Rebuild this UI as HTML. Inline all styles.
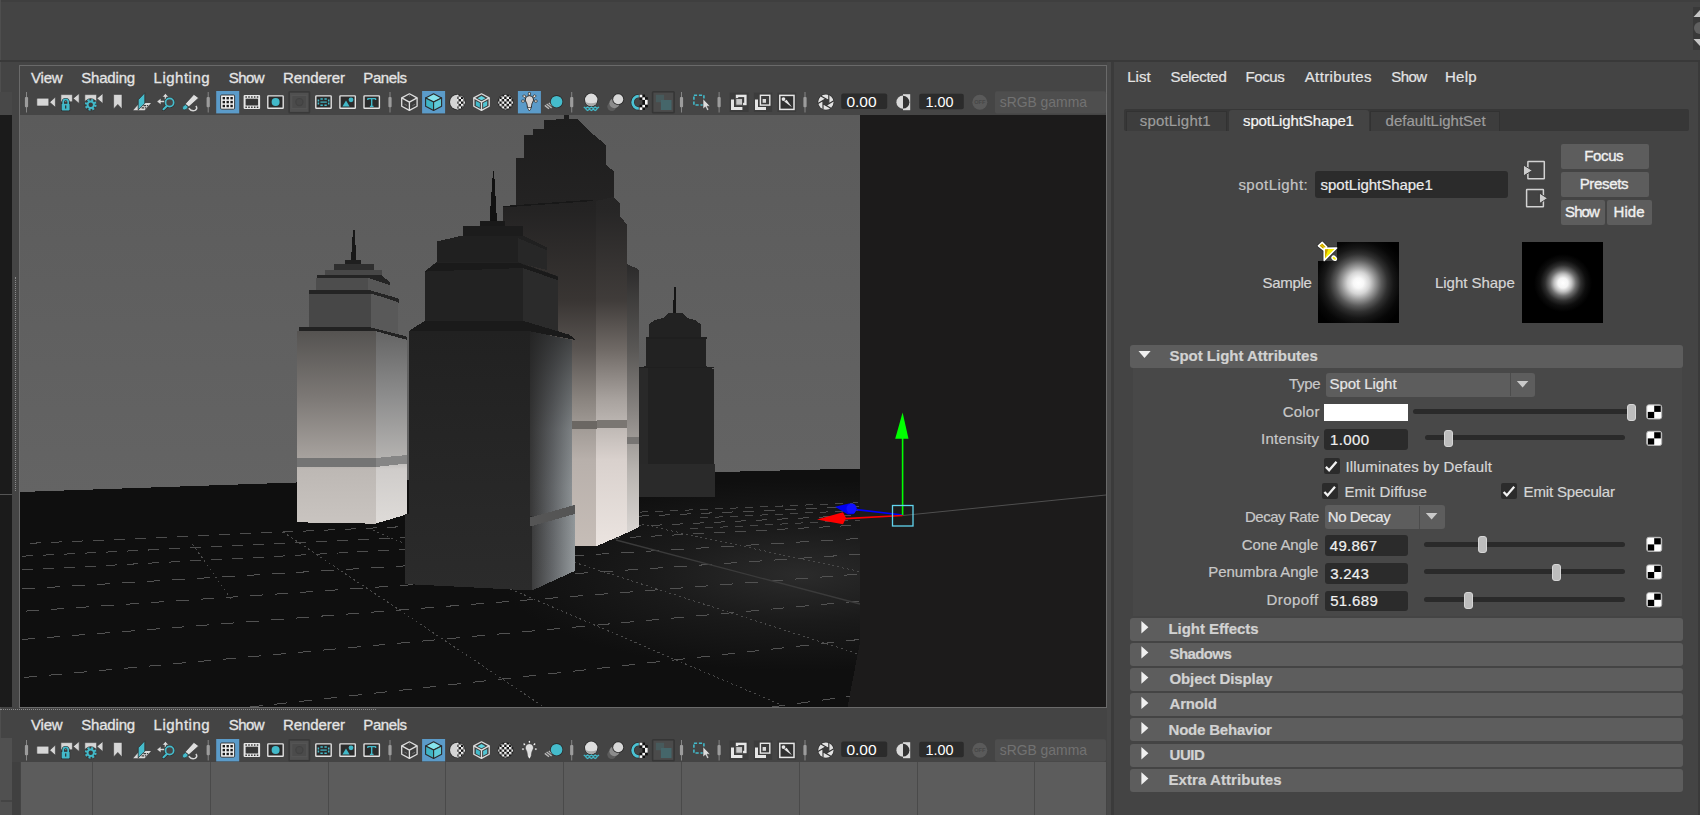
<!DOCTYPE html>
<html>
<head>
<meta charset="utf-8">
<title>Maya - Spot Light Attributes</title>
<style>
*{box-sizing:border-box;margin:0;padding:0}
html,body{width:1700px;height:815px;overflow:hidden;background:#444444}
body{position:relative;font-family:"Liberation Sans",sans-serif;font-size:15px;color:#e4e4e4}
.a{position:absolute}
.t{position:absolute;white-space:nowrap;line-height:18px;height:18px}
.b{font-weight:bold}
.menu{color:#e2e2e2}
.lbl{color:#c6c6c6;text-align:right}
.fld{position:absolute;background:#2b2b2b;border-radius:3px}
.btn{position:absolute;background:#5d5d5d;border-radius:2px;color:#f0f0f0;text-align:center}
.hdr{position:absolute;left:1130px;width:1553px;height:23px;background:#5d5d5d;border-radius:3px}
.hdr .t{left:39px;top:2px;color:#d2d2d2;font-weight:bold}
.trk{position:absolute;height:5px;background:#2a2a2a;border-radius:3px}
.knob{position:absolute;width:9px;height:17px;background:#bdbdbd;border:1px solid #d6d6d6;border-radius:3px}
.chk{position:absolute;width:16px;height:15px}
.cb{position:absolute;width:16px;height:16px;background:#2b2b2b;border-radius:2px}
.dd{position:absolute;background:#5d5d5d;border-radius:3px}
.sep{position:absolute;width:1px;background:#4c4c4c}
</style>
</head>
<body>

<!-- ===== global chrome ===== -->
<div class="a" style="left:0;top:0;width:1700px;height:2px;background:#3f3f3f"></div>
<div class="a" style="left:0;top:0;width:1px;height:815px;background:#4e4e4e"></div>
<div class="a" style="left:0;top:60px;width:1700px;height:2px;background:#393939"></div>
<!-- top-right scroll widget -->
<svg class="a" style="left:1693px;top:7px" width="7" height="43" viewBox="0 0 7 43">
<rect width="7" height="43" fill="#393939"/>
<path d="M0.5 10 L7 3 L7 10Z" fill="#c6c6c6"/>
<circle cx="7" cy="21" r="6" fill="#606060"/>
<path d="M0.5 32 L7 32 L7 39Z" fill="#c6c6c6"/>
</svg>

<!-- left narrow strips -->
<div class="a" style="left:0;top:92px;width:12px;height:23px;background:#484848"></div>
<div class="a" style="left:0;top:115px;width:12px;height:592px;background:#1b1b1b"></div>
<div class="a" style="left:0;top:494px;width:12px;height:1px;background:#555"></div>
<div class="a" style="left:15px;top:277px;width:0;height:214px;border-left:1px dotted #8a8a8a"></div>
<div class="a" style="left:0;top:709px;width:376px;height:0;border-top:1px dotted #8a8a8a"></div>
<div class="a" style="left:0;top:738px;width:12px;height:62px;background:#505050"></div>
<div class="a" style="left:0;top:802px;width:12px;height:13px;background:#505050"></div>
<div class="a" style="left:12px;top:762px;width:8px;height:53px;background:#404040"></div>

<!-- divider between viewport and attribute editor -->
<div class="a" style="left:1107px;top:62px;width:4px;height:753px;background:#484848"></div>
<div class="a" style="left:1111px;top:62px;width:3px;height:753px;background:#3b3b3b"></div>
<div class="a" style="left:1698px;top:62px;width:2px;height:753px;background:#3a3a3a"></div>

<!-- ===== viewport panel frame ===== -->
<div class="a" style="left:19px;top:65px;width:1088px;height:643px;border:1px solid #6a6a6a;background:#454545"></div>

<!-- ===== 3D viewport scene ===== -->
<svg class="a" style="left:20px;top:115px" width="1086" height="592" viewBox="20 115 1086 592" shape-rendering="crispEdges">
<defs>
<linearGradient id="sky" x1="0" y1="115" x2="0" y2="495" gradientUnits="userSpaceOnUse">
<stop offset="0" stop-color="#5b5b5b"/><stop offset="1" stop-color="#646464"/></linearGradient>
<radialGradient id="gnd" cx="800" cy="575" r="300" gradientUnits="userSpaceOnUse" gradientTransform="translate(800 575) scale(1 0.32) translate(-800 -575)">
<stop offset="0" stop-color="#2b2b2b"/><stop offset="0.5" stop-color="#1a1a1a"/><stop offset="1" stop-color="#0f0f0f"/></radialGradient>
<!-- left lit building -->
<linearGradient id="b1f" x1="0" y1="331" x2="0" y2="523" gradientUnits="userSpaceOnUse">
<stop offset="0" stop-color="#555351"/><stop offset="0.35" stop-color="#7d7976"/><stop offset="0.66" stop-color="#a7a29e"/><stop offset="0.72" stop-color="#bdb8b4"/><stop offset="1" stop-color="#c9c4c0"/></linearGradient>
<linearGradient id="b1r" x1="0" y1="331" x2="0" y2="523" gradientUnits="userSpaceOnUse">
<stop offset="0" stop-color="#646464"/><stop offset="0.35" stop-color="#8e8e8e"/><stop offset="0.66" stop-color="#b4b2b0"/><stop offset="0.72" stop-color="#cfccca"/><stop offset="1" stop-color="#dedbd8"/></linearGradient>
<!-- back tall building -->
<linearGradient id="b3f" x1="0" y1="115" x2="0" y2="546" gradientUnits="userSpaceOnUse">
<stop offset="0" stop-color="#1d1d1d"/><stop offset="0.22" stop-color="#242323"/><stop offset="0.43" stop-color="#393533"/><stop offset="0.545" stop-color="#5a5552"/><stop offset="0.66" stop-color="#8a847f"/><stop offset="0.71" stop-color="#9c9691"/><stop offset="0.8" stop-color="#b8b0ab"/><stop offset="1" stop-color="#c6bdb7"/></linearGradient>
<linearGradient id="b3r" x1="0" y1="115" x2="0" y2="546" gradientUnits="userSpaceOnUse">
<stop offset="0" stop-color="#1f1f1f"/><stop offset="0.22" stop-color="#272626"/><stop offset="0.43" stop-color="#403c3a"/><stop offset="0.545" stop-color="#706a66"/><stop offset="0.66" stop-color="#a8a29e"/><stop offset="0.71" stop-color="#bab4b0"/><stop offset="0.8" stop-color="#d9d1cd"/><stop offset="1" stop-color="#ebe4e0"/></linearGradient>
<linearGradient id="b3s" x1="0" y1="268" x2="0" y2="528" gradientUnits="userSpaceOnUse">
<stop offset="0" stop-color="#2d2c2c"/><stop offset="0.315" stop-color="#5a5856"/><stop offset="0.56" stop-color="#8a8683"/><stop offset="0.78" stop-color="#b8b4b0"/><stop offset="1" stop-color="#d6d2cf"/></linearGradient>
<!-- middle dark building right face -->
<linearGradient id="b2r" x1="530" y1="0" x2="576" y2="0" gradientUnits="userSpaceOnUse">
<stop offset="0" stop-color="#383838"/><stop offset="0.5" stop-color="#65686b"/><stop offset="1" stop-color="#979da0"/></linearGradient>
<linearGradient id="b2rv" x1="0" y1="331" x2="0" y2="590" gradientUnits="userSpaceOnUse">
<stop offset="0" stop-color="#1c1c1c" stop-opacity="0.72"/><stop offset="0.19" stop-color="#1c1c1c" stop-opacity="0.42"/><stop offset="0.38" stop-color="#1c1c1c" stop-opacity="0.16"/><stop offset="0.6" stop-color="#1c1c1c" stop-opacity="0.04"/><stop offset="1" stop-color="#1c1c1c" stop-opacity="0"/></linearGradient>
<linearGradient id="b2f" x1="0" y1="331" x2="0" y2="590" gradientUnits="userSpaceOnUse">
<stop offset="0" stop-color="#212121"/><stop offset="1" stop-color="#2b2b2b"/></linearGradient>
</defs>

<!-- sky -->
<rect x="20" y="115" width="1086" height="592" fill="url(#sky)"/>
<!-- ground -->
<polygon points="20,492 296,482.5 640,474 860,468.5 860,707 20,707" fill="#0f0f0f"/>
<polygon points="20,492 296,482.5 640,474 860,468.5 860,707 20,707" fill="url(#gnd)"/>

<!-- ground grid: dashed lines -->
<g stroke="#525252" stroke-width="1" fill="none" stroke-dasharray="13 12">
<path d="M22.0 589.0 L860.0 538.4"/> <path d="M26.0 611.1 L860.0 554.2"/> <path d="M22.0 639.5 L860.0 574.0"/> <path d="M24.0 677.5 L860.0 601.0"/><path d="M249.6 707.0 L860.0 639.4"/><path d="M772.2 707.0 L860.0 694.9"/>
</g>
<g stroke="#4e4e4e" stroke-width="1" fill="none" stroke-dasharray="11 10">
<path d="M30.0 543.3 L860.0 506.3"/> <path d="M22.0 556.2 L860.0 515.2"/> <path d="M22.0 570.0 L860.0 525.0"/>
</g>
<g stroke="#484848" stroke-width="1" fill="none" stroke-dasharray="8 7">
<path d="M640.0 512.1 L860.0 502.7"/> <path d="M700.0 517.9 L860.0 510.4"/> <path d="M690.0 528.7 L860.0 520.0"/>
</g>
<g stroke="#4a4a4a" stroke-width="1" fill="none" stroke-dasharray="2 3">
<path d="M192.4 544 L231 598.7"/>
<path d="M283 532 L544 707"/>
<path d="M368 528 L786 707"/>
<path d="M560 557.7 L860 654.5"/>
<path d="M641.8 524.5 L860 571.6"/>
</g>
<path d="M616 540 L860 604" stroke="#3b3b3b" stroke-width="1.3" shape-rendering="auto"/>
<!-- ===== back tall building (3) ===== -->
<polygon fill="url(#b3f)" points="556,119 564,119 564,115 569,115 569,119 577,119 588,130 606,145 606,165 613.5,171 613.5,197 596,201 596,546 572,546 572,208 503.5,207 503.5,206.5 515.5,204.5 515.5,158 524,158 524,134.5 533,134.5 533,128.5 543.5,128.5 543.5,120 556,120"/>
<rect x="503" y="206" width="70" height="200" fill="url(#b3f)"/>
<polygon fill="url(#b3r)" points="596,201 613.5,197 620,203 620,216 626.5,224 626.5,533 597,546 596,546"/>
<polygon fill="url(#b3s)" points="626.5,264 637,268.5 638.5,270 638.5,527 626.5,533"/>
<!-- tier line on back building -->
<path d="M503.5 206.7 L592.5 200.4" stroke="#181818" stroke-width="1.5"/>
<!-- gray bands -->
<rect x="572" y="420.5" width="25" height="8" fill="#6b6763"/>
<rect x="597" y="420" width="29.5" height="8" fill="#7a7672"/>
<rect x="626.5" y="436.5" width="12" height="7.5" fill="#777573"/>

<!-- ===== small right building (4) ===== -->
<g fill="#222222">
<polygon points="674,287 675.5,287 676.5,313 673,313" fill="#151515"/>
<polygon points="663,318 668,313 682,313 687,318 695,320 700.5,324 700.5,337 706,339 706,366 713.5,369 713.5,464 715,465 715,497 638.5,497 638.5,369 645.5,366 645.5,339 649,337 649,324 655,320"/>
<rect x="638.5" y="464" width="76.5" height="33" fill="#2a2a2a"/>
<rect x="645.5" y="337" width="61" height="1.5" fill="#1f1f1f"/>
<rect x="638.5" y="366.5" width="75" height="1.5" fill="#1f1f1f"/>
<rect x="638.5" y="368" width="9.5" height="96" fill="#292929"/>
</g>

<!-- ===== left lit building (1) ===== -->
<polygon points="353,230 354.5,230 356.5,260 351,260" fill="#171717"/>
<rect x="345" y="260" width="16" height="4" fill="#1f1f1f"/>
<rect x="334" y="263.5" width="40" height="6.5" fill="#2f2f2f"/>
<rect x="325" y="269.5" width="57" height="5.5" fill="#474747"/>
<polygon points="317,274.6 381,274.6 390,282.5 390,286 367.6,278 317,278" fill="#242424"/>
<polygon points="316,277.6 367.6,277.6 367.6,290 316,290" fill="#4d4d4d"/>
<polygon points="367.6,277.6 390,285 390,297 367.6,290" fill="#575757"/>
<polygon points="309,289.6 367.6,289.6 398.5,298.5 398.5,303 371,293.8 309,293.8" fill="#242424"/>
<polygon points="309,293.5 371,293.5 371,327.5 309,327.5" fill="#474747"/>
<polygon points="371,293.5 398,302 398,336 371,327.5" fill="#595959"/>
<polygon points="299,327.4 371,327.4 406.5,336.5 406.5,341 375,331.5 299,331.5" fill="#222222"/>
<polygon points="297,331 375.5,331 375.5,523.7 297,522.3" fill="url(#b1f)"/>
<polygon points="375.5,331 407.3,340 407.3,514.2 375.5,523.7" fill="url(#b1r)"/>
<polygon points="297,458 375.5,458 375.5,467 297,467" fill="#747474"/>
<polygon points="375.5,458 407.3,455 407.3,463.5 375.5,467" fill="#858585"/>

<!-- ===== middle dark building (2) ===== -->
<polygon points="493,170.5 494,170.5 497,221 489.5,221" fill="#111111"/>
<rect x="480" y="221" width="25" height="6" fill="#191919"/>
<rect x="462.5" y="226.4" width="60.5" height="10" fill="#1c1c1c"/>
<polygon points="436.5,241.6 462.5,235.5 523,235.5 546.5,247 546.5,262.6 436.5,262.6" fill="#202020"/>
<polygon points="517.5,238 546.5,250 546.5,270 517.5,262.6" fill="#272727"/>
<polygon points="424.8,271.4 436.5,262 518,262 557.5,276 557.5,330 424.8,321" fill="#222222"/>
<polygon points="522.7,265.5 557.5,279 557.5,332 522.7,321" fill="#2b2b2b"/>
<polygon points="436.5,262.6 518,262.6 557.5,276.5 557.5,280 522.7,268 424.8,271.6" fill="#1a1a1a"/>
<polygon points="408.5,331.3 424.8,320.8 523,320.8 569.5,334.8 576,340 530.2,331.5" fill="#1a1a1a"/>
<polygon points="408.5,331.3 530.2,331.3 530.2,516 532,516 532,590.5 405,584 405,514 408.5,514" fill="url(#b2f)"/>
<polygon points="530.2,331.3 572,340 572,505 574.7,504.5 574.7,571 532,590.5 532,516 530.2,516" fill="url(#b2r)"/>
<polygon points="530.2,331.3 572,340 572,505 574.7,504.5 574.7,571 532,590.5 532,516 530.2,516" fill="url(#b2rv)"/>
<polygon points="530.2,517.5 574.7,505 574.7,514 530.2,526.5" fill="#555555"/>

<!-- ===== big dark wall on right ===== -->
<polygon points="860,115 1106,115 1106,707 847.5,707 855,668 860,643" fill="#1c1b1b"/>
<!-- line from gizmo to right edge -->
<path d="M903 515.5 L1106 495" stroke="#4f4f4f" stroke-width="1" shape-rendering="auto"/>

<!-- ===== transform gizmo ===== -->
<g shape-rendering="auto">
<path d="M902.6 515 L856.5 509.6" stroke="#0000ff" stroke-width="1.6"/>
<polygon points="835,506.8 849,503.5 855,504.5 857,509 854,514 848,514.5" fill="#0000f0"/>
<circle cx="851.5" cy="508.6" r="5" fill="#1010ff"/>
<path d="M902.6 515.5 L845 518.6" stroke="#ff0000" stroke-width="1.6"/>
<polygon points="817,519.4 843,512.3 846,518 843,524.2" fill="#ff0000"/>
<path d="M902.6 515 L902.6 438" stroke="#00ff00" stroke-width="1.6"/>
<polygon points="902.6,412.5 908.5,438.7 895.2,438.7" fill="#00ff00"/>
<rect x="892.5" y="505.5" width="20.5" height="20.5" fill="none" stroke="#62d4ee" stroke-width="1.3"/>
</g>
</svg>


<!-- ===== panel menu + icon toolbar (top) ===== -->
<svg class="a" style="left:0;top:0" width="0" height="0">
<defs>
<pattern id="ck" x="504.2" y="94.2" width="4.8" height="4.8" patternUnits="userSpaceOnUse">
<rect width="4.8" height="4.8" fill="#f6f6f6"/><rect x="2.4" width="2.4" height="2.4" fill="#111"/><rect y="2.4" width="2.4" height="2.4" fill="#111"/>
</pattern>
<clipPath id="cpHalf"><rect x="457.4" y="92" width="10" height="20"/></clipPath>
<g id="sepH">
<rect x="-0.5" y="-10.2" width="1" height="20.5" fill="#858585"/>
<rect x="-1.6" y="-5.2" width="3.2" height="10.2" rx="1" fill="#9c9c9c"/>
</g>
<g id="cube">
<!-- hexagon cube centred at 0,0 ; w17 h17.6 -->
<polygon points="0,-8.3 7.7,-4.2 7.7,4.2 0,8.3 -7.7,4.2 -7.7,-4.2"/>
</g>
<!-- everything in page coordinates of the TOP toolbar (centre y = 102) -->
<g id="tbar" font-family="Liberation Sans, sans-serif">
<use href="#sepH" x="26.5" y="102.2"/>
<use href="#sepH" x="208.2" y="102.2"/>
<use href="#sepH" x="390" y="102.2"/>
<use href="#sepH" x="571.7" y="102.2"/>
<use href="#sepH" x="681.5" y="102.2"/>
<use href="#sepH" x="719.1" y="102.2"/>
<use href="#sepH" x="805" y="102.2"/>

<!-- camera -->
<g fill="#d6d6d6" stroke="#3a3a3a" stroke-width="0.6">
<rect x="36.8" y="98.2" width="12" height="7.8" rx="0.8"/>
<polygon points="55.4,97 55.4,107.3 49.7,102.2"/>
<!-- camera + lock -->
<rect x="60.9" y="94.6" width="11.5" height="7.2" rx="0.8"/>
<polygon points="79.2,93.4 79.2,103.5 73.2,98.4"/>
<!-- camera + gear -->
<rect x="84.8" y="94.6" width="11.8" height="7.2" rx="0.8"/>
<polygon points="102.9,93.4 102.9,103.5 96.9,98.4"/>
<!-- bookmark -->
<polygon points="113.6,94.4 122,94.4 122,109 117.8,104.4 113.6,109"/>
</g>
<!-- lock -->
<path d="M63.2 104 v-2 a2.5 2.6 0 0 1 5 0 v2" fill="none" stroke="#2d2d2d" stroke-width="3"/>
<rect x="61" y="103" width="9.2" height="8.2" rx="1" fill="#2d2d2d"/>
<path d="M63.2 104 v-2 a2.5 2.6 0 0 1 5 0 v2" fill="none" stroke="#42b9c9" stroke-width="1.7"/>
<rect x="61.7" y="103.7" width="7.9" height="6.9" rx="0.8" fill="#42b9c9"/>
<rect x="65.1" y="105.4" width="1.2" height="3.2" fill="#2d2d2d"/>
<!-- gear -->
<circle cx="90.7" cy="104.8" r="6.6" fill="#3a3a3a"/>
<circle cx="90.7" cy="104.8" r="4.6" fill="none" stroke="#42b9c9" stroke-width="2.6" stroke-dasharray="1.9 1.71"/>
<circle cx="90.7" cy="104.8" r="3.2" fill="none" stroke="#42b9c9" stroke-width="2"/>
<circle cx="90.7" cy="104.8" r="1.7" fill="#3a3a3a"/>
<!-- image plane -->
<polygon points="133.2,110.2 139.6,103 151,103 144.6,110.2" fill="#dadada"/>
<path d="M141.6 107.8 h4.8 M143.4 105.6 h4.8" stroke="#3a3a3a" stroke-width="1.2" stroke-dasharray="2.6 0.8"/>
<polygon points="138.2,99.8 144.8,92.8 144.8,103.4 138.2,109.9" fill="#45bccc" stroke="#2d2d2d" stroke-width="0.8"/>
<!-- 2D pan / zoom -->
<g fill="#dcdcdc" stroke="#333" stroke-width="0.5">
<polygon points="156.8,101.5 160.9,98.2 160.9,100.6 165.4,100.6 165.4,102.5 160.9,102.5 160.9,104.8"/>
<polygon points="165.4,93.4 168.6,97 166.4,97 166.4,99.4 164.4,99.4 164.4,97 162.3,97"/>
</g>
<path d="M166.8 106 L163.5 109.2" stroke="#2d2d2d" stroke-width="3.4" stroke-linecap="round"/>
<circle cx="169.6" cy="102.5" r="4.1" fill="#444" stroke="#2d2d2d" stroke-width="2.8"/>
<path d="M166.8 106 L163.5 109.2" stroke="#45bccc" stroke-width="2.1" stroke-linecap="round"/>
<circle cx="169.6" cy="102.5" r="4.1" fill="#474747" stroke="#45bccc" stroke-width="1.7"/>
<!-- grease pencil -->
<polygon points="193.9,94.4 198.6,97.9 188.8,106.8 185.2,104" fill="#dedede" stroke="#333" stroke-width="0.6"/>
<path d="M185.4 104.6 L188.2 106.8 Q187 110 184 110 Q181.6 109.4 182.8 106.6Z" fill="#45bccc" stroke="#2d2d2d" stroke-width="0.6"/>
<path d="M188.8 108.2 Q191.4 111.6 195 110.4 Q198 108.8 195.9 106" fill="none" stroke="#d6d6d6" stroke-width="1.5"/>

<!-- grid (active) -->
<rect x="216.2" y="91" width="23" height="22.4" fill="#5b9bc9"/>
<rect x="220.6" y="95" width="14" height="14.2" rx="1" fill="#f0f0f0" stroke="#2d2d2d" stroke-width="0.9"/>
<g fill="#1a1a1a">
<rect x="222.6" y="97" width="2.4" height="2.4"/><rect x="226.5" y="97" width="2.4" height="2.4"/><rect x="230.4" y="97" width="2.4" height="2.4"/>
<rect x="222.6" y="100.9" width="2.4" height="2.4"/><rect x="226.5" y="100.9" width="2.4" height="2.4"/><rect x="230.4" y="100.9" width="2.4" height="2.4"/>
<rect x="222.6" y="104.8" width="2.4" height="2.4"/><rect x="226.5" y="104.8" width="2.4" height="2.4"/><rect x="230.4" y="104.8" width="2.4" height="2.4"/>
</g>
<!-- film gate -->
<rect x="243.6" y="95.1" width="16.5" height="14" rx="1" fill="#e6e6e6"/>
<rect x="245.6" y="98.7" width="12.5" height="6.8" fill="#363636"/>
<path d="M245.4 97 h13 M245.4 107.3 h13" stroke="#363636" stroke-width="1.5" stroke-dasharray="1.5 1.35"/>
<!-- resolution gate -->
<rect x="267.8" y="95.9" width="15.4" height="12.4" rx="0.6" fill="#2b2b2b" stroke="#e2e2e2" stroke-width="1.4"/>
<circle cx="275.6" cy="102.1" r="4" fill="#42b9c9"/>
<!-- gate mask (pressed, dim) -->
<rect x="288.3" y="91" width="22" height="22.6" rx="1.5" fill="#393939"/>
<rect x="290" y="92.7" width="18.6" height="19.2" fill="#505050"/>
<rect x="291.8" y="95.6" width="15" height="13" fill="#4b4b4b" stroke="#565656" stroke-width="1"/>
<circle cx="299.4" cy="102.1" r="3.6" fill="#484848" stroke="#424242" stroke-width="1.2"/>
<!-- field chart -->
<rect x="315.8" y="95.9" width="15.4" height="12.4" rx="0.6" fill="#2b2b2b" stroke="#e2e2e2" stroke-width="1.4"/>
<path d="M320.4 98.9 h6.4 M320.4 105.3 h6.4" stroke="#42b9c9" stroke-width="1.5" stroke-dasharray="2.4 1.6"/>
<path d="M318.4 99.6 v5 M328.7 99.6 v5" stroke="#42b9c9" stroke-width="1.5" stroke-dasharray="2 1"/>
<path d="M320.4 102.1 h6.4" stroke="#42b9c9" stroke-width="1.2"/>
<!-- safe action -->
<rect x="339.9" y="95.9" width="15.4" height="12.4" rx="0.6" fill="#2b2b2b" stroke="#e2e2e2" stroke-width="1.4"/>
<polygon points="342.4,106.6 346,100.6 349.6,106.6" fill="#42b9c9"/>
<circle cx="351" cy="99.8" r="2.4" fill="#42b9c9"/>
<!-- safe title -->
<rect x="364" y="95.9" width="15.4" height="12.4" rx="0.6" fill="#2b2b2b" stroke="#e2e2e2" stroke-width="1.4"/>
<path d="M367.6 98.6 h8.2 M371.7 98.6 v7.6 M369.9 106.4 h3.6 M367.8 98.4 v1.6 M375.6 98.4 v1.6" stroke="#42b9c9" stroke-width="1.4" fill="none"/>

<!-- wireframe cube -->
<g transform="translate(409.4 102.1)" fill="#3c3c3c" stroke="#dedede" stroke-width="1.3" stroke-linejoin="round">
<use href="#cube"/><path d="M0 0 L-7.7 -4.2 M0 0 L7.7 -4.2 M0 0 L0 8.3" fill="none"/>
<path d="M-5 2 l2.6 1.4 M3 3.6 l2.6 -1.4 M0 -5.6 l0 -1.2" stroke="#777" stroke-width="0.9"/>
</g>
<!-- smooth shaded (active) -->
<rect x="422.1" y="91" width="23" height="22.4" fill="#5b9bc9"/>
<g transform="translate(433.6 102.1)" stroke="#2b2b2b" stroke-width="1.1" stroke-linejoin="round">
<polygon points="0,-8.4 8,-4.2 0,0 -8,-4.2" fill="#86e3ec"/>
<polygon points="-8,-4.2 0,0 0,8.4 -8,4.2" fill="#3fb4c4"/>
<polygon points="8,-4.2 0,0 0,8.4 8,4.2" fill="#5fcbd8"/>
</g>
<!-- half-checker sphere -->
<circle cx="457.4" cy="102.1" r="8.2" fill="#2d2d2d"/>
<circle cx="457.4" cy="102.1" r="7.4" fill="#d4d4d4"/>
<circle cx="457.4" cy="102.1" r="7.4" fill="url(#ck)" clip-path="url(#cpHalf)"/>
<!-- wire on shaded cube -->
<g transform="translate(481.5 102.1)" stroke-linejoin="round">
<use href="#cube" fill="#3c3c3c" stroke="#dedede" stroke-width="1.3"/>
<path d="M0 0 L-7.7 -4.2 M0 0 L7.7 -4.2 M0 0 L0 8.3" fill="none" stroke="#dedede" stroke-width="1.3"/>
<polygon points="0,-6 4,-3.9 0,-1.9 -4,-3.9" fill="#5fd3e0"/>
<polygon points="-5.7,-1.2 -1.6,1 -1.6,5.6 -5.7,3.4" fill="#42b9c9"/>
<polygon points="5.7,-1.2 1.6,1 1.6,5.6 5.7,3.4" fill="#52c4d2"/>
</g>
<!-- checker sphere -->
<circle cx="505.6" cy="102.1" r="8.1" fill="#2d2d2d"/>
<circle cx="505.6" cy="102.1" r="7.4" fill="url(#ck)"/>
<!-- shadows -->
<path d="M544.8 105.4 l4.2 3.4 M546.6 104 l5 4 M548.8 103 l4.6 3.6 M550.6 101.8 l3.6 2.8" stroke="#b8b8b8" stroke-width="1.4"/>
<circle cx="556.6" cy="101.7" r="6.6" fill="#2d2d2d"/>
<circle cx="556.6" cy="101.7" r="5.8" fill="#45bccc"/>

<!-- ambient occlusion -->
<circle cx="591.2" cy="99.8" r="7" fill="#2d2d2d"/>
<circle cx="591.2" cy="99.8" r="6.2" fill="#dcdcdc"/>
<path d="M585.4 102 q5.8 2.6 11.6 0 q-0.8 2.6 -3 3.6 q-2.8 1 -5.6 0 q-2.2 -1 -3 -3.6z" fill="#a8a8a8"/>
<path d="M583.8 107 l1.9 1.3 l1.9 -1.3 l1.9 1.3 l1.9 -1.3 l1.9 1.3 l1.9 -1.3 l1.9 1.3 l1.9 -1.3" fill="none" stroke="#42b9c9" stroke-width="1.4"/>
<path d="M585.7 109.3 l1.9 1.3 l1.9 -1.3 l1.9 1.3 l1.9 -1.3 l1.9 1.3 l1.9 -1.3" fill="none" stroke="#42b9c9" stroke-width="1.2"/>
<!-- motion blur -->
<circle cx="611.8" cy="106.6" r="4.5" fill="#5c5c5c"/>
<circle cx="614.4" cy="103.3" r="5" fill="#8c8c8c"/>
<circle cx="618.2" cy="99.2" r="5.9" fill="#2d2d2d"/>
<circle cx="618.2" cy="99.2" r="5" fill="#d8d8d8"/>
<!-- anti-aliasing -->
<path d="M638.8 96 A6.3 6.3 0 0 0 638.8 108.6" fill="none" stroke="#2d2d2d" stroke-width="4"/>
<path d="M638.8 96.1 A6.2 6.2 0 0 0 638.8 108.5" fill="none" stroke="#4bc3d4" stroke-width="2.7"/>
<g fill="#111">
<rect x="642.2" y="94.6" width="2.8" height="2.8"/><rect x="645" y="97.2" width="2.8" height="2.8"/><rect x="639.6" y="97.2" width="2.8" height="2.8"/>
<rect x="642.4" y="99.8" width="2.6" height="5"/><rect x="639.6" y="104.8" width="2.8" height="2.8"/>
<rect x="645" y="104.6" width="2.8" height="2.8"/><rect x="642.2" y="107.2" width="2.8" height="2.8"/>
</g>
<g fill="#f6f6f6">
<rect x="639.7" y="94.8" width="2.6" height="2.5"/><rect x="642.4" y="97.4" width="2.6" height="2.5"/>
<rect x="645" y="99.8" width="2.6" height="4.8"/>
<rect x="642.4" y="104.9" width="2.6" height="2.5"/><rect x="639.7" y="107.4" width="2.6" height="2.5"/>
</g>
<!-- pressed dim button -->
<rect x="651.8" y="91" width="23.1" height="22.5" rx="1.5" fill="#363636"/>
<rect x="653.4" y="92.6" width="19.9" height="19.3" fill="#4b4b4b"/>
<rect x="655.9" y="94.8" width="8.2" height="7.4" fill="#475a5c"/>
<rect x="660.9" y="100" width="10.6" height="10" fill="#45666a"/>
<!-- isolate select -->
<rect x="693.9" y="95.2" width="10" height="9.8" fill="none" stroke="#42b9c9" stroke-width="1.6" stroke-dasharray="3.2 1.8"/>
<polygon points="703,98.8 703,109 705.4,106.9 707.2,110.6 708.9,109.8 707.1,106.2 710.2,106.2" fill="#dcdcdc" stroke="#3a3a3a" stroke-width="0.6"/>

<!-- stacked squares A -->
<rect x="729.6" y="92.6" width="19" height="19.4" fill="#3c3c3c"/>
<rect x="737" y="95.9" width="8.4" height="8.1" fill="#3c3c3c" stroke="#e6e6e6" stroke-width="2.4"/>
<rect x="735.8" y="98.6" width="6.8" height="6.6" fill="#c9c9c9" stroke="#3c3c3c" stroke-width="0.9"/>
<path d="M731 99.4 h3 v7.6 h8.4 v3.1 h-11.4z" fill="#e6e6e6"/>
<!-- stacked squares B -->
<rect x="753.8" y="92.6" width="18.4" height="19.4" fill="#3c3c3c"/>
<rect x="760.4" y="95.3" width="9.4" height="9.8" fill="#3c3c3c" stroke="#e6e6e6" stroke-width="1.4"/>
<rect x="762.6" y="99" width="3.4" height="3.8" fill="#dadada"/>
<path d="M755 99.4 h3 v7.6 h8 v3.1 h-11z" fill="#e6e6e6"/>
<!-- pinned square C -->
<rect x="777.4" y="92.6" width="18.8" height="19.4" fill="#3c3c3c"/>
<rect x="779.8" y="95.4" width="14.2" height="14" fill="#303030" stroke="#e6e6e6" stroke-width="1.5"/>
<circle cx="783.5" cy="99.1" r="1.9" fill="#e6e6e6"/>
<polygon points="784.2,101.4 786.6,99.7 792,107.3" fill="#e6e6e6"/>

<!-- exposure aperture -->
<circle cx="825.9" cy="102.1" r="8.4" fill="#303030"/>
<circle cx="825.9" cy="102.1" r="7.7" fill="#e2e2e2"/>
<path d="M828.8 103.8 L828.8 94.6 M825.9 105.4 L833.8 100.8 M823.0 103.8 L830.9 108.3 M823.0 100.4 L823.0 109.6 M825.9 98.8 L818.0 103.4 M828.8 100.4 L820.9 95.9" stroke="#303030" stroke-width="1.15" fill="none"/>
<polygon points="828.8,100.4 828.8,103.8 825.9,105.4 823.0,103.8 823.0,100.4 825.9,98.8" fill="#3a3a3a"/>
<rect x="841.2" y="93.6" width="46" height="15.4" rx="2" fill="#2b2b2b"/>
<text x="846.4" y="107.3" font-size="15.4" fill="#ffffff" textLength="30.2" lengthAdjust="spacingAndGlyphs">0.00</text>
<!-- gamma / contrast -->
<path d="M903 95.6 A6.6 6.6 0 0 0 903 108.8Z" fill="#dadada"/>
<rect x="903" y="94.2" width="7.2" height="16" fill="#dadada"/>
<path d="M903 95.8 A6.4 6.4 0 0 1 903 108.6Z" fill="#333"/>
<rect x="919.2" y="93.8" width="44.6" height="15.4" rx="2" fill="#2b2b2b"/>
<text x="925.6" y="107.3" font-size="15.4" fill="#ffffff" textLength="28" lengthAdjust="spacingAndGlyphs">1.00</text>
<!-- OFF -->
<circle cx="979.8" cy="102.2" r="7.5" fill="#5a5a5a"/>
<text x="979.8" y="104.3" font-size="5.6" font-weight="bold" fill="#474747" text-anchor="middle">OFF</text>
<!-- colour space field -->
<rect x="995" y="91.2" width="111" height="22.2" rx="2" fill="#4e4e4e"/>
<text x="999.7" y="106.7" font-size="15" fill="#727272" textLength="87.3" lengthAdjust="spacingAndGlyphs">sRGB gamma</text>
</g>

<!-- light bulb variants -->
<g id="bulbRays" stroke="#2b2b2b" stroke-width="0.8">
<rect x="528.3" y="92.4" width="2.2" height="2.8" rx="0.8"/>
<rect x="523.2" y="94.8" width="2.2" height="2.8" rx="0.8" transform="rotate(-45 524.3 96.2)"/>
<rect x="533.4" y="94.8" width="2.2" height="2.8" rx="0.8" transform="rotate(45 534.5 96.2)"/>
<rect x="521.6" y="100" width="2.8" height="2.2" rx="0.8"/>
<rect x="534.4" y="100" width="2.8" height="2.2" rx="0.8"/>
</g>
<path id="bulbShape" d="M529.4 95.7 A4.05 4.05 0 0 1 532.7 102.2 C531.8 103.6 531.6 104.8 531.4 107.4 L529.4 110.9 L527.4 107.4 C527.2 104.8 527 103.6 526.1 102.2 A4.05 4.05 0 0 1 529.4 95.7Z"/>
<g id="bulbOn">
<rect x="517.9" y="91" width="23" height="22.4" fill="#5b9bc9"/>
<use href="#bulbRays" fill="#f2e6da"/>
<use href="#bulbShape" fill="#d9d5d3" stroke="#2b2b2b" stroke-width="1"/>
<path d="M527.6 107.5 h3.6" stroke="#2b2b2b" stroke-width="0.7"/><polygon points="528.1,108.2 530.7,108.2 529.4,110.4" fill="#f8f4f2"/>
</g>
<g id="bulbOff">
<use href="#bulbRays" fill="#efefef"/>
<use href="#bulbShape" fill="#dedede" stroke="#3a3a3a" stroke-width="0.6"/>
<polygon points="528.1,108.2 530.7,108.2 529.4,110.4" fill="#f8f8f8"/>
</g>
</defs>
</svg>

<svg class="a" style="left:20px;top:88px" width="1087" height="27" viewBox="20 88 1087 27">
<use href="#tbar"/><use href="#bulbOn"/>
</svg>

<!-- panel menu text (top) -->


<!-- ===== bottom panel: menu, toolbar, empty viewport ===== -->
<svg class="a" style="left:20px;top:735.6px" width="1087" height="27" viewBox="20 88 1087 27">
<use href="#tbar"/><use href="#bulbOff"/>
</svg>
<div class="a" style="left:21px;top:762px;width:1085px;height:53px;background:#5c5c5c"></div>
<svg class="a" style="left:21px;top:762px" width="1085" height="53" viewBox="21 762 1085 53" shape-rendering="crispEdges">
<g stroke="#4a4a4a" stroke-width="1">
<path d="M92.5 762V815M210.5 762V815M328.5 762V815M445.5 762V815M563.5 762V815M681.5 762V815M799.5 762V815M917.5 762V815M1034.5 762V815"/>
</g>
</svg>


<!-- ===== Attribute Editor ===== -->

<!-- tab bar -->
<div class="a" style="left:1124px;top:109px;width:565px;height:22px;background:#373737;border-radius:2px"></div>
<div class="a" style="left:1126px;top:111px;width:101px;height:20px;background:#3d3d3d;border:1px solid #323232;border-bottom:0"></div>
<div class="a" style="left:1229px;top:110px;width:140px;height:22px;background:#444444;border-radius:3px 3px 0 0"></div>
<div class="a" style="left:1370px;top:111px;width:130px;height:20px;background:#3d3d3d;border:1px solid #323232;border-bottom:0"></div>

<!-- name row -->
<div class="fld" style="left:1315px;top:171px;width:193px;height:27px"></div>
<svg class="a" style="left:1520px;top:158px" width="30" height="54" viewBox="1520 158 30 54">
<rect x="1527.9" y="161.6" width="16.4" height="17.2" rx="0.4" fill="#434343" stroke="#d2d2d2" stroke-width="1.5"/>
<polygon points="1523.4,165 1523.4,176 1532.4,170.5" fill="#cdcdcd" stroke="#3c3c3c" stroke-width="1"/>
<rect x="1526.6" y="189.6" width="16.8" height="17.2" rx="0.4" fill="#434343" stroke="#d2d2d2" stroke-width="1.5"/>
<polygon points="1539.4,193 1539.4,203.6 1547.6,198.3" fill="#cdcdcd" stroke="#3c3c3c" stroke-width="1"/>
</svg>
<div class="btn" style="left:1560.5px;top:144px;width:88.5px;height:25px"></div>
<div class="btn" style="left:1560.5px;top:172px;width:88.5px;height:25.4px"></div>
<div class="btn" style="left:1560.5px;top:199.5px;width:44.3px;height:25.4px"></div>
<div class="btn" style="left:1607px;top:199.5px;width:44.6px;height:25.4px"></div>

<!-- swatches -->
<div class="a" style="left:1318px;top:242px;width:81px;height:81px;background:radial-gradient(circle at 40.5px 41px,#ffffff 0,#f8f8f8 5px,#d4d4d4 11px,#959595 17px,#5a5a5a 23px,#303030 29px,#171717 35px,#070707 42px,#000 50px)"></div>
<div class="a" style="left:1318px;top:242px;width:19px;height:19px;background:#444"></div>
<svg class="a" style="left:1314px;top:238px" width="28" height="28" viewBox="1314 238 28 28">
<g stroke="#1e1e1e" stroke-width="3.2" stroke-linejoin="round" fill="#1e1e1e" opacity="0.55">
<polygon points="1318.4,245.8 1322.2,242.4 1326.8,247 1323.6,250"/>
<polygon points="1324.2,248.2 1336.6,248 1324.2,260.4"/>
</g>
<polygon points="1318.4,245.8 1322.2,242.4 1326.8,247 1323.6,250" fill="#e6c400" stroke="#ffffff" stroke-width="1.5" stroke-linejoin="round"/>
<polygon points="1324.2,248.2 1336.6,248 1324.2,260.4" fill="#f7ef00" stroke="#ffffff" stroke-width="1.5" stroke-linejoin="round"/>
<polygon points="1325,249.4 1328.2,249.2 1325,258.2" fill="#c9a000"/>
<path d="M1320.4 245.2 l2.6 2.8 M1321.8 244 l2.8 2.8" stroke="#b89400" stroke-width="0.9"/>
<ellipse cx="1334.2" cy="258.2" rx="2.5" ry="1.7" transform="rotate(40 1334.2 258.2)" fill="#f7ef00" stroke="#ffffff" stroke-width="1.3"/>
</svg>
<div class="a" style="left:1521.5px;top:242px;width:81px;height:81px;background:radial-gradient(circle at 41px 41px,#ffffff 0,#f4f4f4 5px,#bdbdbd 9px,#6e6e6e 13px,#2e2e2e 18px,#0e0e0e 23px,#000 29px)"></div>

<!-- Spot Light Attributes section -->
<div class="a" style="left:1133px;top:367px;width:549px;height:249px;background:#484848"></div>
<div class="hdr" style="top:345px;width:553px"></div>
<svg class="a" style="left:1138px;top:350px" width="14" height="9"><polygon points="0.5,1 12.6,1 6.5,8" fill="#efefef"/></svg>

<div class="dd" style="left:1325.5px;top:372.6px;width:209.5px;height:24px"></div>
<div class="sep" style="left:1510px;top:373px;height:23px"></div>
<svg class="a" style="left:1516px;top:380px" width="14" height="9"><polygon points="0.8,1 12.4,1 6.6,7.4" fill="#c9c9c9"/></svg>

<div class="a" style="left:1324.2px;top:403.8px;width:84px;height:17.2px;background:#ffffff"></div>
<div class="trk" style="left:1413px;top:409px;width:216px"></div>
<div class="knob" style="left:1627.3px;top:403.6px"></div>

<div class="fld" style="left:1324.2px;top:429.4px;width:84px;height:20.4px"></div>
<div class="trk" style="left:1424.5px;top:435.4px;width:200.5px"></div>
<div class="knob" style="left:1444.2px;top:430.2px"></div>

<div class="cb" style="left:1323.5px;top:458.3px"></div>
<div class="cb" style="left:1322px;top:483.4px"></div>
<div class="cb" style="left:1501.2px;top:483.4px"></div>

<div class="dd" style="left:1324.6px;top:505.3px;width:120px;height:23.8px"></div>
<div class="sep" style="left:1419px;top:506px;height:22.5px"></div>
<svg class="a" style="left:1425px;top:512.4px" width="14" height="9"><polygon points="0.8,1 12.4,1 6.6,7.4" fill="#c9c9c9"/></svg>

<div class="fld" style="left:1324.6px;top:535.1px;width:83.8px;height:20.7px"></div>
<div class="trk" style="left:1424px;top:541.6px;width:201px"></div>
<div class="knob" style="left:1478.2px;top:536.2px"></div>

<div class="fld" style="left:1324.6px;top:562.9px;width:83.8px;height:20.7px"></div>
<div class="trk" style="left:1424px;top:569.3px;width:201px"></div>
<div class="knob" style="left:1551.6px;top:564px"></div>

<div class="fld" style="left:1324.6px;top:590.6px;width:83.8px;height:20.7px"></div>
<div class="trk" style="left:1424px;top:597px;width:201px"></div>
<div class="knob" style="left:1464.3px;top:591.8px"></div>

<!-- check marks + checker map buttons -->
<svg class="a" style="left:1320px;top:400px" width="350" height="215" viewBox="1320 400 350 215">
<defs>
<g id="tick"><path d="M2.4 8.6 L5.6 12 L13 3.4" fill="none" stroke="#f2f2f2" stroke-width="2.3"/></g>
<g id="cmap"><rect x="0.5" y="0.5" width="15" height="14.2" rx="2.2" fill="#ffffff" stroke="#b4b4b4" stroke-width="1"/>
<rect x="8" y="1.4" width="6.6" height="6.2" fill="#000"/><rect x="1.6" y="7.6" width="6.4" height="6.2" fill="#000"/></g>
</defs>
<use href="#tick" x="1323.5" y="458.3"/><use href="#tick" x="1322" y="483.4"/><use href="#tick" x="1501.2" y="483.4"/>
<use href="#cmap" x="1646.2" y="404.3"/><use href="#cmap" x="1646.2" y="430.8"/>
<use href="#cmap" x="1646.2" y="536.8"/><use href="#cmap" x="1646.2" y="564.4"/><use href="#cmap" x="1646.2" y="592.2"/>
</svg>

<!-- collapsed sections -->
<div class="hdr" style="top:617.5px;width:553px"></div>
<div class="hdr" style="top:642.7px;width:553px"></div>
<div class="hdr" style="top:667.9px;width:553px"></div>
<div class="hdr" style="top:693.2px;width:553px"></div>
<div class="hdr" style="top:718.4px;width:553px"></div>
<div class="hdr" style="top:743.6px;width:553px"></div>
<div class="hdr" style="top:768.8px;width:553px"></div>
<svg class="a" style="left:1140px;top:617px" width="10" height="180" viewBox="0 0 10 180">
<g fill="#f0f0f0">
<polygon points="1.4,4 1.4,16.4 8.4,10.2"/>
<polygon points="1.4,29.2 1.4,41.6 8.4,35.4"/>
<polygon points="1.4,54.4 1.4,66.8 8.4,60.6"/>
<polygon points="1.4,79.7 1.4,92.1 8.4,85.9"/>
<polygon points="1.4,104.9 1.4,117.3 8.4,111.1"/>
<polygon points="1.4,130.1 1.4,142.5 8.4,136.3"/>
<polygon points="1.4,155.3 1.4,167.7 8.4,161.5"/>
</g>
</svg>
<!-- ===== text labels ===== -->
<div class="t" style="left:31.00px;top:68.80px;color:#e4e4e4;letter-spacing:-0.203px;-webkit-text-stroke:0.30px #e4e4e4">View</div>
<div class="t" style="left:81.20px;top:68.80px;color:#e4e4e4;letter-spacing:-0.184px;-webkit-text-stroke:0.30px #e4e4e4">Shading</div>
<div class="t" style="left:153.60px;top:68.80px;color:#e4e4e4;letter-spacing:0.500px;-webkit-text-stroke:0.30px #e4e4e4">Lighting</div>
<div class="t" style="left:228.70px;top:68.80px;color:#e4e4e4;letter-spacing:-0.563px;-webkit-text-stroke:0.30px #e4e4e4">Show</div>
<div class="t" style="left:283.10px;top:68.80px;color:#e4e4e4;letter-spacing:-0.106px;-webkit-text-stroke:0.30px #e4e4e4">Renderer</div>
<div class="t" style="left:363.30px;top:68.80px;color:#e4e4e4;letter-spacing:-0.413px;-webkit-text-stroke:0.30px #e4e4e4">Panels</div>
<div class="t" style="left:31.00px;top:716.40px;color:#e4e4e4;letter-spacing:-0.203px;-webkit-text-stroke:0.30px #e4e4e4">View</div>
<div class="t" style="left:81.20px;top:716.40px;color:#e4e4e4;letter-spacing:-0.184px;-webkit-text-stroke:0.30px #e4e4e4">Shading</div>
<div class="t" style="left:153.60px;top:716.40px;color:#e4e4e4;letter-spacing:0.500px;-webkit-text-stroke:0.30px #e4e4e4">Lighting</div>
<div class="t" style="left:228.70px;top:716.40px;color:#e4e4e4;letter-spacing:-0.563px;-webkit-text-stroke:0.30px #e4e4e4">Show</div>
<div class="t" style="left:283.10px;top:716.40px;color:#e4e4e4;letter-spacing:-0.106px;-webkit-text-stroke:0.30px #e4e4e4">Renderer</div>
<div class="t" style="left:363.30px;top:716.40px;color:#e4e4e4;letter-spacing:-0.413px;-webkit-text-stroke:0.30px #e4e4e4">Panels</div>
<div class="t" style="left:1127.20px;top:67.70px;color:#e4e4e4;letter-spacing:0.042px;-webkit-text-stroke:0.20px #e4e4e4">List</div>
<div class="t" style="left:1170.60px;top:67.70px;color:#e4e4e4;letter-spacing:-0.319px;-webkit-text-stroke:0.20px #e4e4e4">Selected</div>
<div class="t" style="left:1245.50px;top:67.70px;color:#e4e4e4;letter-spacing:-0.387px;-webkit-text-stroke:0.20px #e4e4e4">Focus</div>
<div class="t" style="left:1304.70px;top:67.70px;color:#e4e4e4;letter-spacing:0.393px;-webkit-text-stroke:0.20px #e4e4e4">Attributes</div>
<div class="t" style="left:1391.20px;top:67.70px;color:#e4e4e4;letter-spacing:-0.563px;-webkit-text-stroke:0.20px #e4e4e4">Show</div>
<div class="t" style="left:1444.90px;top:67.70px;color:#e4e4e4;letter-spacing:0.298px;-webkit-text-stroke:0.20px #e4e4e4">Help</div>
<div class="t" style="left:1139.70px;top:112.30px;color:#9c9c9c;letter-spacing:0.191px;-webkit-text-stroke:0.20px #9c9c9c">spotLight1</div>
<div class="t" style="left:1243.00px;top:112.30px;color:#f4f4f4;letter-spacing:-0.118px;-webkit-text-stroke:0.20px #f4f4f4">spotLightShape1</div>
<div class="t" style="left:1385.60px;top:112.30px;color:#9c9c9c;letter-spacing:-0.008px;-webkit-text-stroke:0.20px #9c9c9c">defaultLightSet</div>
<div class="t" style="left:1238.40px;top:175.80px;color:#c4c4c4;letter-spacing:0.480px;-webkit-text-stroke:0.20px #c4c4c4">spotLight:</div>
<div class="t" style="left:1320.60px;top:176.10px;color:#ececec;letter-spacing:-0.032px;-webkit-text-stroke:0.20px #ececec">spotLightShape1</div>
<div class="t" style="left:1584.30px;top:147.30px;color:#f0f0f0;letter-spacing:-0.387px;-webkit-text-stroke:0.35px #f0f0f0">Focus</div>
<div class="t" style="left:1579.70px;top:174.90px;color:#f0f0f0;letter-spacing:-0.342px;-webkit-text-stroke:0.35px #f0f0f0">Presets</div>
<div class="t" style="left:1565.00px;top:202.80px;color:#f0f0f0;letter-spacing:-0.863px;-webkit-text-stroke:0.35px #f0f0f0">Show</div>
<div class="t" style="left:1613.50px;top:202.80px;color:#f0f0f0;letter-spacing:0.064px;-webkit-text-stroke:0.35px #f0f0f0">Hide</div>
<div class="t" style="left:1262.60px;top:273.80px;color:#d6d6d6;letter-spacing:-0.343px;-webkit-text-stroke:0.20px #d6d6d6">Sample</div>
<div class="t" style="left:1435.00px;top:273.80px;color:#d6d6d6;letter-spacing:-0.033px;-webkit-text-stroke:0.20px #d6d6d6">Light Shape</div>
<div class="t" style="left:1169.40px;top:346.90px;color:#d2d2d2;letter-spacing:-0.010px;font-weight:bold;-webkit-text-stroke:0.20px #d2d2d2">Spot Light Attributes</div>
<div class="t" style="left:1289.00px;top:374.60px;color:#c8c8c8;letter-spacing:-0.292px;-webkit-text-stroke:0.20px #c8c8c8">Type</div>
<div class="t" style="left:1329.60px;top:374.80px;color:#e6e6e6;letter-spacing:-0.065px;-webkit-text-stroke:0.20px #e6e6e6">Spot Light</div>
<div class="t" style="left:1282.70px;top:402.80px;color:#c8c8c8;letter-spacing:0.213px;-webkit-text-stroke:0.20px #c8c8c8">Color</div>
<div class="t" style="left:1261.00px;top:430.20px;color:#c8c8c8;letter-spacing:0.255px;-webkit-text-stroke:0.20px #c8c8c8">Intensity</div>
<div class="t" style="left:1329.90px;top:430.80px;color:#f0f0f0;letter-spacing:0.426px;-webkit-text-stroke:0.20px #f0f0f0">1.000</div>
<div class="t" style="left:1345.50px;top:457.70px;color:#d6d6d6;letter-spacing:0.146px;-webkit-text-stroke:0.20px #d6d6d6">Illuminates by Default</div>
<div class="t" style="left:1344.40px;top:482.80px;color:#d6d6d6;letter-spacing:0.169px;-webkit-text-stroke:0.20px #d6d6d6">Emit Diffuse</div>
<div class="t" style="left:1523.60px;top:482.80px;color:#d6d6d6;letter-spacing:-0.173px;-webkit-text-stroke:0.20px #d6d6d6">Emit Specular</div>
<div class="t" style="left:1244.90px;top:507.80px;color:#c8c8c8;letter-spacing:-0.447px;-webkit-text-stroke:0.20px #c8c8c8">Decay Rate</div>
<div class="t" style="left:1327.70px;top:508.20px;color:#e6e6e6;letter-spacing:-0.394px;-webkit-text-stroke:0.20px #e6e6e6">No Decay</div>
<div class="t" style="left:1241.70px;top:535.90px;color:#c8c8c8;letter-spacing:-0.094px;-webkit-text-stroke:0.20px #c8c8c8">Cone Angle</div>
<div class="t" style="left:1329.80px;top:537.00px;color:#f0f0f0;letter-spacing:0.273px;-webkit-text-stroke:0.20px #f0f0f0">49.867</div>
<div class="t" style="left:1208.20px;top:563.30px;color:#c8c8c8;letter-spacing:-0.054px;-webkit-text-stroke:0.20px #c8c8c8">Penumbra Angle</div>
<div class="t" style="left:1330.20px;top:564.60px;color:#f0f0f0;letter-spacing:0.251px;-webkit-text-stroke:0.20px #f0f0f0">3.243</div>
<div class="t" style="left:1266.60px;top:591.20px;color:#c8c8c8;letter-spacing:0.425px;-webkit-text-stroke:0.20px #c8c8c8">Dropoff</div>
<div class="t" style="left:1330.20px;top:592.20px;color:#f0f0f0;letter-spacing:0.333px;-webkit-text-stroke:0.20px #f0f0f0">51.689</div>
<div class="t" style="left:1168.50px;top:619.70px;color:#d2d2d2;letter-spacing:-0.058px;font-weight:bold;-webkit-text-stroke:0.20px #d2d2d2">Light Effects</div>
<div class="t" style="left:1169.50px;top:644.93px;color:#d2d2d2;letter-spacing:-0.600px;font-weight:bold;-webkit-text-stroke:0.20px #d2d2d2">Shadows</div>
<div class="t" style="left:1169.50px;top:670.16px;color:#d2d2d2;letter-spacing:-0.112px;font-weight:bold;-webkit-text-stroke:0.20px #d2d2d2">Object Display</div>
<div class="t" style="left:1169.50px;top:695.39px;color:#d2d2d2;letter-spacing:-0.173px;font-weight:bold;-webkit-text-stroke:0.20px #d2d2d2">Arnold</div>
<div class="t" style="left:1168.50px;top:720.62px;color:#d2d2d2;letter-spacing:-0.202px;font-weight:bold;-webkit-text-stroke:0.20px #d2d2d2">Node Behavior</div>
<div class="t" style="left:1169.50px;top:745.85px;color:#d2d2d2;letter-spacing:-0.444px;font-weight:bold;-webkit-text-stroke:0.20px #d2d2d2">UUID</div>
<div class="t" style="left:1168.50px;top:771.08px;color:#d2d2d2;letter-spacing:0.068px;font-weight:bold;-webkit-text-stroke:0.20px #d2d2d2">Extra Attributes</div>


</body>
</html>
